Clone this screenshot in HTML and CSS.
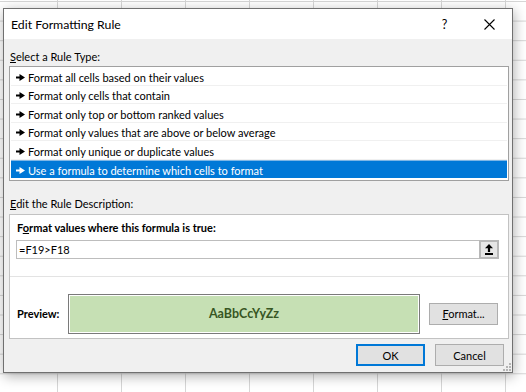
FILE: index.html
```html
<!DOCTYPE html>
<html>
<head>
<meta charset="utf-8">
<link rel="stylesheet" href="styles.css">
</head>
<body>
<div class="dialog">
  <div class="titlebar">
    <span class="title">Edit Formatting Rule</span>
    <span class="tbtn help">?</span>
    <span class="tbtn close"><svg width="11" height="11" viewBox="0 0 11 11"><path d="M0.5 0.5L10.5 10.5M10.5 0.5L0.5 10.5" stroke="#000" stroke-width="1.1" fill="none"/></svg></span>
  </div>
  <div class="content">
    <div class="label"><u>S</u>elect a Rule Type:</div>
    <div class="listbox">
      <div class="item"><svg class="arrow" width="9" height="7" viewBox="0 0 9 7"><path d="M0 2.5H3.5V0L9 3.5L3.5 7V4.5H0Z"/></svg><span>Format all cells based on their values</span></div>
      <div class="item"><svg class="arrow" width="9" height="7" viewBox="0 0 9 7"><path d="M0 2.5H3.5V0L9 3.5L3.5 7V4.5H0Z"/></svg><span>Format only cells that contain</span></div>
      <div class="item"><svg class="arrow" width="9" height="7" viewBox="0 0 9 7"><path d="M0 2.5H3.5V0L9 3.5L3.5 7V4.5H0Z"/></svg><span>Format only top or bottom ranked values</span></div>
      <div class="item"><svg class="arrow" width="9" height="7" viewBox="0 0 9 7"><path d="M0 2.5H3.5V0L9 3.5L3.5 7V4.5H0Z"/></svg><span>Format only values that are above or below average</span></div>
      <div class="item"><svg class="arrow" width="9" height="7" viewBox="0 0 9 7"><path d="M0 2.5H3.5V0L9 3.5L3.5 7V4.5H0Z"/></svg><span>Format only unique or duplicate values</span></div>
      <div class="item selected"><svg class="arrow" width="9" height="7" viewBox="0 0 9 7"><path d="M0 2.5H3.5V0L9 3.5L3.5 7V4.5H0Z"/></svg><span>Use a formula to determine which cells to format</span></div>
    </div>
    <div class="label label-desc"><u>E</u>dit the Rule Description:</div>
    <div class="panel">
      <div class="panel-top">
        <div class="bold">F<u>o</u>rmat values where this formula is true:</div>
        <div class="input">
          <span class="input-text">=F19&gt;F18</span>
          <span class="collapse"><svg width="8" height="11" viewBox="0 0 8 11"><path d="M4 0L8 4.2H5.1V8H2.9V4.2H0Z" fill="#000"/><rect x="0" y="9" width="8" height="2" fill="#000"/></svg></span>
        </div>
      </div>
      <div class="panel-bottom">
        <div class="bold preview-label">Preview:</div>
        <div class="preview"><div class="preview-fill">AaBbCcYyZz</div></div>
        <div class="btn btn-format"><span><u>F</u>ormat...</span></div>
      </div>
    </div>
    <div class="buttons">
      <div class="btn btn-ok">OK</div>
      <div class="btn">Cancel</div>
    </div>
    <svg class="grip" width="8" height="8" viewBox="0 0 8 8"><g fill="#b4b4b4"><rect x="6" y="0" width="2" height="2"/><rect x="3" y="3" width="2" height="2"/><rect x="6" y="3" width="2" height="2"/><rect x="0" y="6" width="2" height="2"/><rect x="3" y="6" width="2" height="2"/><rect x="6" y="6" width="2" height="2"/></g></svg>
  </div>
</div>
</body>
</html>
```
FILE: styles.css
```css
html, body {
  margin: 0;
}
body {
  width: 526px;
  height: 392px;
  overflow: hidden;
  box-sizing: border-box;
  padding: 8px 0 0 3px;
  font-family: Lato, "Noto Sans", sans-serif;
  font-size: 11px;
  color: #000;
  background-color: #fff;
  background-image:
    linear-gradient(to right, #d6d6d6 1px, transparent 1px),
    linear-gradient(to bottom, #d6d6d6 1px, transparent 1px);
  background-size: 64px 100%, 100% 19.6px;
  background-position: 57px 0, 0 1px;
}
.dialog {
  width: 508px;
  height: 363px;
  border: 1px solid #707070;
  background: #f0f0f0;
  box-shadow: 1px 3px 12px rgba(0, 0, 0, 0.32);
  display: flex;
  flex-direction: column;
}
.titlebar {
  height: 30px;
  flex: none;
  background: #fff;
  display: flex;
  align-items: center;
  padding-left: 7px;
}
.title {
  flex: 1;
  font-size: 12.3px;
  padding-top: 1px;
}
.tbtn {
  width: 45px;
  height: 30px;
  display: flex;
  align-items: center;
  justify-content: center;
}
.help {
  font-size: 12.5px;
}
.content {
  flex: 1;
  position: relative;
  padding: 10px 3px 0 5px;
}
.label {
  height: 16px;
  line-height: 16px;
  padding-left: 1px;
}
.listbox {
  margin-top: 1px;
  width: 500px;
  height: 115px;
  box-sizing: border-box;
  border: 1px solid #a0a0a0;
  background: #fff;
  padding: 0 1px;
}
.item {
  height: 18.5px;
  box-sizing: border-box;
  display: flex;
  align-items: center;
  padding: 3px 0 0 5px;
  border-bottom: 1px solid #f0f0f0;
  white-space: nowrap;
}
.arrow {
  fill: #000;
  margin-right: 3px;
  flex: none;
}
.item.selected {
  background: #0078d7;
  color: #fff;
  border-top: 1px solid #7fb7e6;
  border-bottom: none;
}
.item.selected .arrow {
  fill: #fff;
}
.label-desc {
  margin-top: 15px;
}
.panel {
  margin-top: 2px;
  width: 500px;
  height: 125px;
  box-sizing: border-box;
  border: 1px solid #c2c2c2;
  background: #fff;
}
.panel-top {
  height: 62px;
  box-sizing: border-box;
  border-bottom: 1px solid #e3e3e3;
  padding: 5px 0 0 6px;
}
.bold {
  font-weight: 700;
  height: 16px;
  line-height: 16px;
  padding-left: 1px;
}
.input {
  margin-top: 4px;
  width: 483px;
  height: 19px;
  box-sizing: border-box;
  border: 1px solid #bdbdbd;
  display: flex;
  align-items: center;
}
.input-text {
  flex: 1;
  padding-left: 2px;
}
.collapse {
  width: 20px;
  height: 19px;
  margin-right: -1px;
  box-sizing: border-box;
  border: 2px solid #b8b8b8;
  background: #e6e6e6;
  display: flex;
  align-items: center;
  justify-content: center;
}
.panel-bottom {
  height: 61px;
  box-sizing: border-box;
  padding: 12px 0 0 6px;
  display: flex;
  align-items: center;
}
.preview-label {
  width: 51px;
  flex: none;
}
.preview {
  width: 352px;
  height: 40px;
  box-sizing: border-box;
  border: 1px solid #7a7a7a;
  padding: 1px;
  background: #fff;
  flex: none;
}
.preview-fill {
  height: 100%;
  background: #c6e0b4;
  color: #375623;
  font-weight: 700;
  font-size: 12.5px;
  display: flex;
  align-items: center;
  justify-content: center;
}
.btn {
  width: 69px;
  height: 22px;
  box-sizing: border-box;
  border: 1px solid #adadad;
  background: #e1e1e1;
  display: flex;
  align-items: center;
  justify-content: center;
  flex: none;
}
.btn-format {
  margin-left: 9px;
}
.buttons {
  display: flex;
  justify-content: flex-end;
  gap: 10px;
  margin-top: 5px;
  padding-right: 5px;
}
.btn-ok {
  border: 2px solid #0078d7;
}
.grip {
  position: absolute;
  right: 1px;
  bottom: 1px;
}
```
